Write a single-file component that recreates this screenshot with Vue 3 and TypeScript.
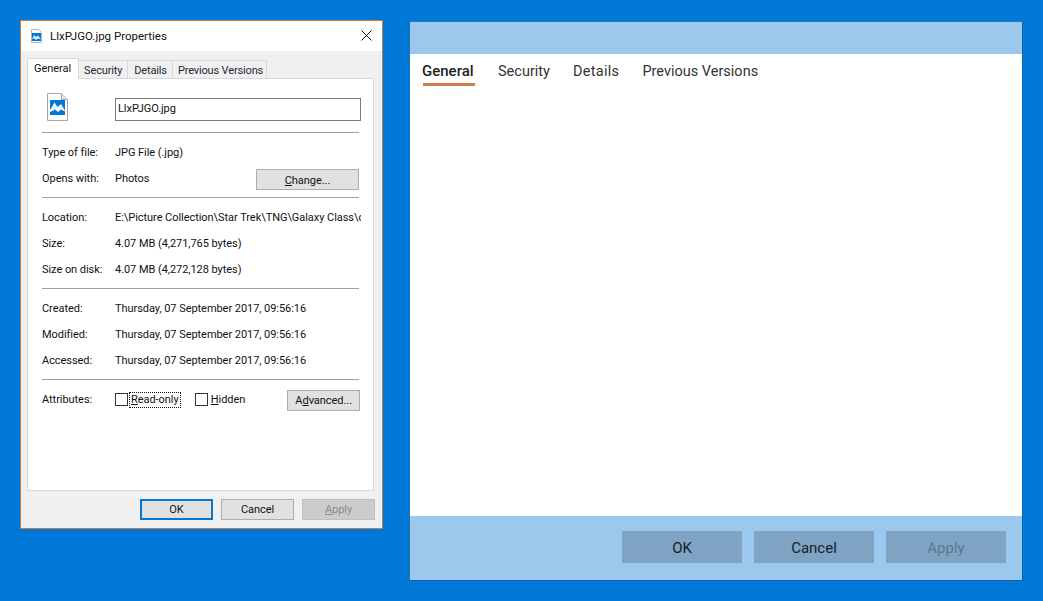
<script setup lang="ts">
interface Row { label: string; value: string }
const tabs: string[] = ['General', 'Security', 'Details', 'Previous Versions']
const location: Row[] = [
  { label: 'Location:', value: 'E:\\Picture Collection\\Star Trek\\TNG\\Galaxy Class\\cutaway\\LlxPJGO.jpg' },
  { label: 'Size:', value: '4.07 MB (4,271,765 bytes)' },
  { label: 'Size on disk:', value: '4.07 MB (4,272,128 bytes)' },
]
const dates: Row[] = [
  { label: 'Created:', value: 'Thursday, 07 September 2017, 09:56:16' },
  { label: 'Modified:', value: 'Thursday, 07 September 2017, 09:56:16' },
  { label: 'Accessed:', value: 'Thursday, 07 September 2017, 09:56:16' },
]
</script>

<template>
  <div class="desktop">
    <section class="classic">
      <header class="titlebar">
        <svg class="title-icon" width="11" height="14" viewBox="0 0 11 14">
          <path d="M.5.500h7l3 3v10H.5z" fill="#fff" stroke="#b5b5b5" />
          <rect x="1" y="4" width="9" height="8" fill="#0078d7" />
          <path d="M1 10l2.500-4 1.500 2 2-1.500L10 10.500 7 9.500 5 11 3.500 9.500z" fill="#e3f1fb" />
        </svg>
        <span class="title-text">LlxPJGO.jpg Properties</span>
        <svg class="close" width="11" height="11" viewBox="0 0 11 11">
          <path d="M.5.500l10 10M10.500.500l-10 10" stroke="#111" stroke-width="1" fill="none" />
        </svg>
      </header>

      <div class="client">
        <nav class="old-tabs">
          <span v-for="(t, i) in tabs" :key="t" class="old-tab" :class="{ active: i === 0 }">{{ t }}</span>
        </nav>

        <div class="panel">
          <div class="name-row">
            <svg class="file-icon" width="21" height="28" viewBox="0 0 21 28">
              <path d="M.5.500h14l6 6v21H.5z" fill="#fff" stroke="#a6a6a6" />
              <path d="M14.500.500v6h6" fill="#e4e4e4" stroke="#a6a6a6" />
              <rect x="3" y="7" width="15" height="15" fill="#0078d7" />
              <path d="M3 17l4.500-7.500 3 4.500 3.500-3 4 6.500v1l-4-2-3 2.500-3-2.500-5 2.500z" fill="#f2f8fd" />
            </svg>
            <div class="name-box">LlxPJGO.jpg</div>
          </div>

          <div class="group">
            <div class="row"><span class="label">Type of file:</span><span>JPG File (.jpg)</span></div>
            <div class="row opens">
              <span class="label">Opens with:</span><span class="grow">Photos</span>
              <button class="old-btn change" type="button"><u>C</u>hange...</button>
            </div>
          </div>

          <div class="group">
            <div v-for="r in location" :key="r.label" class="row">
              <span class="label">{{ r.label }}</span><span class="clip">{{ r.value }}</span>
            </div>
          </div>

          <div class="group">
            <div v-for="r in dates" :key="r.label" class="row">
              <span class="label">{{ r.label }}</span><span>{{ r.value }}</span>
            </div>
          </div>

          <div class="group last">
            <div class="row">
              <span class="label">Attributes:</span>
              <span class="check"></span>
              <span class="focus"><u>R</u>ead-only</span>
              <span class="check second"></span>
              <span class="hidden-label"><u>H</u>idden</span>
              <button class="old-btn advanced" type="button">A<u>d</u>vanced...</button>
            </div>
          </div>
        </div>

        <footer class="old-actions">
          <button class="old-btn action primary" type="button">OK</button>
          <button class="old-btn action" type="button">Cancel</button>
          <button class="old-btn action disabled" type="button"><u>A</u>pply</button>
        </footer>
      </div>
    </section>

    <section class="modern">
      <div class="modern-top"></div>
      <div class="modern-body">
        <nav class="modern-tabs">
          <span v-for="(t, i) in tabs" :key="t" class="modern-tab" :class="{ active: i === 0 }">{{ t }}</span>
        </nav>
      </div>
      <footer class="modern-actions">
        <button class="modern-btn" type="button">OK</button>
        <button class="modern-btn" type="button">Cancel</button>
        <button class="modern-btn off" type="button">Apply</button>
      </footer>
    </section>
  </div>
</template>

<style>
html, body { margin: 0; background: #0078d7; }
</style>

<style scoped>
.desktop {
  width: 1043px;
  height: 601px;
  box-sizing: border-box;
  background: #0078d7;
  padding: 20px 0 0 20px;
  display: flex;
  align-items: flex-start;
  gap: 26px;
  overflow: hidden;
  font-family: Roboto, "Liberation Sans", sans-serif;
  color: #111;
}
.classic {
  width: 363px;
  height: 509px;
  box-sizing: border-box;
  border: 1px solid #c77b45;
  background: #f0f0f0;
  display: flex;
  flex-direction: column;
  font-size: 11px;
  letter-spacing: -0.05px;
}
.titlebar {
  height: 30px;
  background: #fff;
  display: flex;
  align-items: center;
  padding: 0 10px;
}
.title-icon { margin-right: 8px; }
.title-text { flex: 1; font-size: 11.5px; letter-spacing: 0; }
.close { margin-bottom: 2px; }
.client { flex: 1; display: flex; flex-direction: column; padding-top: 7px; }
.old-tabs { display: flex; align-items: flex-end; height: 20px; padding-left: 6px; }
.old-tab {
  height: 18px;
  box-sizing: border-box;
  padding: 0 5px;
  line-height: 19px;
  letter-spacing: -0.15px;
  background: #f0f0f0;
  border: 1px solid #d9d9d9;
  border-left: 0;
  border-bottom: 0;
  color: #1a2a3a;
}
.old-tab:nth-child(3) { padding-left: 6px; }
.old-tab:nth-child(4) { padding-right: 3px; }
.old-tab.active {
  height: 21px;
  margin-bottom: -1px;
  position: relative;
  background: #fff;
  border-left: 1px solid #d9d9d9;
  padding: 0 7px 0 6px;
  line-height: 19px;
  letter-spacing: -0.05px;
  color: #111;
}
.panel {
  width: 347px;
  height: 413px;
  margin-left: 6px;
  box-sizing: border-box;
  background: #fff;
  border: 1px solid #d9d9d9;
  padding: 0 14px;
}
.name-row {
  height: 54px;
  box-sizing: border-box;
  padding-top: 14px;
  padding-left: 5px;
  display: flex;
  align-items: flex-start;
  border-bottom: 1px solid #a0a0a0;
}
.file-icon { flex: none; }
.name-box {
  margin-left: 47px;
  margin-top: 5px;
  margin-right: -2px;
  flex: 1;
  height: 23px;
  box-sizing: border-box;
  border: 1px solid #7a7a7a;
  padding: 0 2px;
  line-height: 19px;
}
.group { padding: 6px 0; border-bottom: 1px solid #a0a0a0; }
.group.last { border-bottom: 0; }
.row { height: 26px; display: flex; align-items: center; white-space: nowrap; }
.label { width: 73px; flex: none; }
.grow { flex: 1; }
.clip { overflow: hidden; width: 246px; flex: none; margin-right: -2px; }
.old-btn {
  font: inherit;
  letter-spacing: inherit;
  color: #111;
  height: 21px;
  box-sizing: border-box;
  background: #e1e1e1;
  border: 1px solid #adadad;
  padding: 0;
}
.change { width: 103px; margin-top: 3px; padding-top: 1px; }
.check { width: 13px; height: 13px; box-sizing: border-box; border: 1px solid #333; background: #fff; flex: none; }
.second { margin-left: 15px; }
.focus { margin-left: 2px; margin-top: 1px; outline: 1px dotted #111; padding: 0 1px; height: 14px; line-height: 14px; width: 48px; }
.hidden-label { margin-left: 3px; width: 77px; }
.advanced { width: 73px; margin-left: auto; margin-right: -1px; margin-top: 2px; padding-top: 1px; }
.old-actions { display: flex; justify-content: flex-end; gap: 8px; padding: 8px 7px 0 0; }
.action { width: 73px; }
.primary { border: 2px solid #0078d7; }
.disabled { background: #ccc; color: #8a8a8a; border-color: #bfbfbf; }

.modern {
  width: 614px;
  height: 560px;
  margin-top: 1px;
  box-sizing: border-box;
  border: 1px solid #0a63ad;
  border-left-color: #1b6fb5;
  border-top-color: #1b7ccb;
  display: flex;
  flex-direction: column;
  background: #fff;
  font-size: 15px;
}
.modern-top { height: 32px; background: #9cc8ed; }
.modern-body { flex: 1; background: #fff; }
.modern-tabs { display: flex; gap: 23px; padding: 7px 0 0 12px; font-size: 14.5px; }
.modern-tab {
  height: 25px;
  line-height: 21px;
  box-sizing: border-box;
  color: #333;
}
.modern-tab:nth-child(3) { letter-spacing: .3px; }
.modern-tab.active {
  width: 52px;
  flex: none;
  white-space: nowrap;
  font-weight: 500;
  font-size: 15px;
  color: #222;
  border-bottom: 3px solid #c8814f;
  margin-left: 1px;
  text-indent: -1px;
}
.modern-actions {
  height: 64px;
  background: #9cc8ed;
  display: flex;
  justify-content: flex-end;
  gap: 12px;
  padding: 15px 16px 0 0;
  box-sizing: border-box;
}
.modern-btn {
  width: 120px;
  height: 32px;
  border: 0;
  padding: 1px 0 0;
  background: #7ea3c3;
  color: #16202a;
  font: inherit;
}
.modern-btn.off { color: #5b7890; }
</style>
